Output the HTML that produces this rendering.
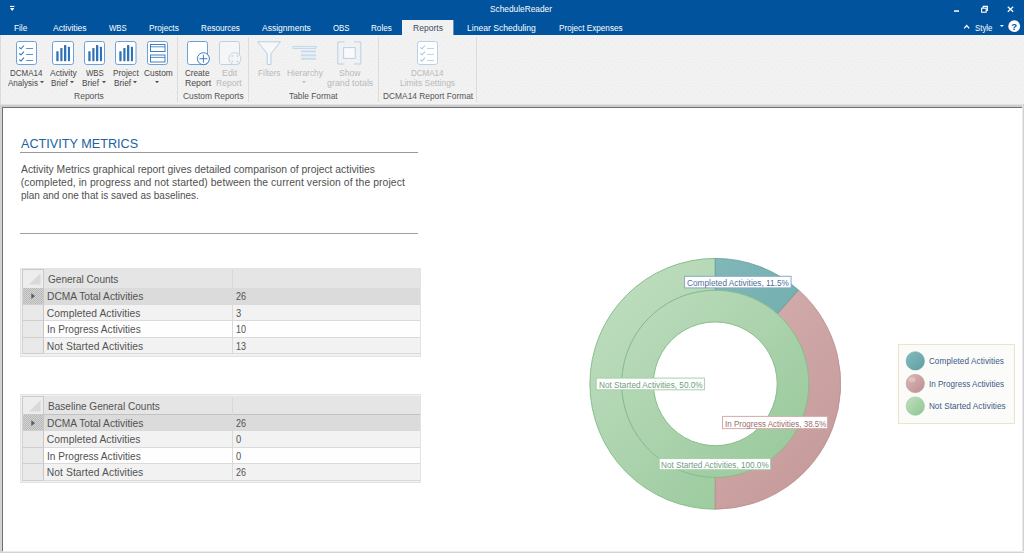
<!DOCTYPE html>
<html><head><meta charset="utf-8"><title>ScheduleReader</title>
<style>
html,body{margin:0;padding:0;width:1024px;height:553px;overflow:hidden;background:#fff;font-family:"Liberation Sans",sans-serif}
.abs{position:absolute;box-sizing:border-box}
.t{position:absolute;white-space:pre;transform-origin:0 50%;font-family:"Liberation Sans",sans-serif;line-height:normal}
</style></head><body>

<div class="abs" style="left:0;top:0;width:1024px;height:35px;background:#00539c"></div>
<svg class="abs" style="left:0;top:18px" width="1024" height="86" viewBox="0 18 1024 86"><defs><pattern id="dots" width="6" height="6" patternUnits="userSpaceOnUse"><rect width="6" height="6" fill="#f2f2f2"/><rect x="2" y="2" width="1" height="1" fill="#ebebeb"/><rect x="5" y="2" width="1" height="1" fill="#ebebeb"/><rect x="1" y="4" width="1" height="1" fill="#ececec"/><rect x="5" y="5" width="1" height="1" fill="#ececec"/><rect x="3" y="0" width="1" height="1" fill="#ececec"/></pattern></defs><rect x="0" y="35" width="1024" height="69" fill="url(#dots)"/><rect x="402" y="20" width="51.4" height="16" fill="url(#dots)"/></svg>
<div class="abs" style="left:0;top:104px;width:1024px;height:449px;background:#d3d3d3"></div><div class="abs" style="left:0;top:104px;width:1024px;height:1px;background:#e2e2e2"></div><div class="abs" style="left:0;top:105px;width:1024px;height:2px;background:#cdcdcd"></div>
<div class="abs" style="left:0;top:35px;width:1px;height:69px;background:#dcdcdc"></div>
<div class="abs" style="left:2px;top:107px;width:1020px;height:444px;background:#fff;border-left:1px solid #707076;border-top:1px solid #707076;box-sizing:border-box"></div>
<div class="abs" style="left:1022px;top:104px;width:1px;height:449px;background:#e8e8e8"></div><div class="abs" style="left:1023px;top:104px;width:1px;height:449px;background:#d2d2d2"></div>
<div class="abs" style="left:3px;top:551px;width:1021px;height:1px;background:#ebebeb"></div><div class="abs" style="left:0;top:552px;width:1024px;height:1px;background:#d2d2d2"></div>
<!-- window controls -->
<svg class="abs" style="left:940px;top:0" width="84" height="35" viewBox="940 0 84 35">
<rect x="954" y="10.3" width="5" height="1.5" fill="#fff"/>
<rect x="981.6" y="8.2" width="4.6" height="4" fill="none" stroke="#fff" stroke-width="1.1"/>
<path d="M983.2,8 V6.4 H987.4 V10.4 H986.4" fill="none" stroke="#fff" stroke-width="1.1"/>
<path d="M1007.8,6.8 L1013.2,11.8 M1013.2,6.8 L1007.8,11.8" stroke="#fff" stroke-width="1.2"/>
<path d="M964.2,28.4 L966.7,25.6 L969.2,28.4" fill="none" stroke="#fff" stroke-width="1.3"/>
<path d="M999.9,25 H1003.9 L1001.9,27 Z" fill="#fff"/>
<circle cx="1014.2" cy="26.2" r="5.9" fill="#fff"/>
<text x="1014.2" y="29.6" font-family="Liberation Sans, sans-serif" font-weight="bold" font-size="9.5" text-anchor="middle" fill="#00539c">?</text>
<path d="M0,0" />
</svg>
<svg class="abs" style="left:8px;top:4px" width="10" height="9" viewBox="8 4 10 9"><rect x="10" y="5.9" width="4.4" height="1.1" fill="#fff"/><path d="M10,8 H14.4 L12.2,10.9 Z" fill="#fff"/></svg>
<div class="abs" style="left:20px;top:152px;width:398px;height:1px;background:#999"></div>
<div class="abs" style="left:20px;top:233px;width:398px;height:1px;background:#a0a0a0"></div>

<div class="abs" style="left:177px;top:37px;width:1px;height:65px;background:#dcdcdc"></div><div class="abs" style="left:248px;top:37px;width:1px;height:65px;background:#dcdcdc"></div><div class="abs" style="left:378px;top:37px;width:1px;height:65px;background:#dcdcdc"></div><div class="abs" style="left:476px;top:37px;width:1px;height:65px;background:#dcdcdc"></div>
<svg class="abs" style="left:16px;top:41px" width="22" height="25" viewBox="0 0 22 25">
<rect x="0.5" y="0.5" width="20" height="23" rx="2.2" fill="#fff" stroke="#6da1da"/>
<path d="M3.2,6.4 L5,7.8 L8,4.5 M3.2,12.5 L5,13.9 L8,10.6 M3.2,18.6 L5,20 L8,16.7" fill="none" stroke="#2e73b8" stroke-width="1.05"/>
<path d="M10.1,7.5 H17 M10.1,13.5 H17 M10.1,19.5 H17" stroke="#2e73b8" stroke-width="1" opacity="0.75"/>
</svg><svg class="abs" style="left:52px;top:41px" width="23" height="25" viewBox="0 0 23 25">
<rect x="0.5" y="0.5" width="21" height="23" rx="2.2" fill="#fff" stroke="#6da1da"/>
<rect x="4.3" y="10.2" width="2.3" height="10" rx="0.6" fill="#2e73b8"/>
<rect x="8.3" y="7" width="2.2" height="13.2" rx="0.6" fill="#2e73b8"/>
<rect x="12" y="4.1" width="2.3" height="16.1" rx="0.6" fill="#2e73b8"/>
<rect x="15.9" y="5.7" width="2.1" height="14.5" rx="0.6" fill="#2e73b8"/>
</svg><svg class="abs" style="left:84px;top:41px" width="23" height="25" viewBox="0 0 23 25">
<rect x="0.5" y="0.5" width="20" height="23" rx="2.2" fill="#fff" stroke="#6da1da"/>
<rect x="4.3" y="10.2" width="2.3" height="10" rx="0.6" fill="#2e73b8"/>
<rect x="8.3" y="7" width="2.2" height="13.2" rx="0.6" fill="#2e73b8"/>
<rect x="12" y="4.1" width="2.3" height="16.1" rx="0.6" fill="#2e73b8"/>
<rect x="15.9" y="5.7" width="2.1" height="14.5" rx="0.6" fill="#2e73b8"/>
</svg><svg class="abs" style="left:115px;top:41px" width="23" height="25" viewBox="0 0 23 25">
<rect x="0.5" y="0.5" width="20.5" height="23" rx="2.2" fill="#fff" stroke="#6da1da"/>
<rect x="4.3" y="10.2" width="2.3" height="10" rx="0.6" fill="#2e73b8"/>
<rect x="8.3" y="7" width="2.2" height="13.2" rx="0.6" fill="#2e73b8"/>
<rect x="12" y="4.1" width="2.3" height="16.1" rx="0.6" fill="#2e73b8"/>
<rect x="15.9" y="5.7" width="2.1" height="14.5" rx="0.6" fill="#2e73b8"/>
</svg><svg class="abs" style="left:147px;top:41px" width="23" height="25" viewBox="0 0 23 25">
<rect x="0.5" y="0.5" width="20" height="23" rx="2.2" fill="#fff" stroke="#6da1da"/>
<rect x="3.5" y="3.5" width="14.5" height="7" fill="#fff" stroke="#2e73b8" stroke-width="0.9"/>
<path d="M3.5,5.8 H18" stroke="#2e73b8" stroke-width="0.8"/>
<rect x="3.5" y="14" width="14.5" height="7" fill="#fff" stroke="#2e73b8" stroke-width="0.9"/>
<path d="M3.5,16.4 H18" stroke="#2e73b8" stroke-width="0.8"/>
</svg><svg class="abs" style="left:187px;top:41px" width="24" height="26" viewBox="0 0 24 26">
<rect x="0.5" y="0.5" width="20" height="23" rx="2.2" fill="#fff" stroke="#6da1da"/>
<circle cx="16.4" cy="17.7" r="6" fill="#fff" stroke="#2e73b8" stroke-width="0.9"/>
<path d="M16.4,13.7 V21.7 M12.4,17.7 H20.4" stroke="#2e73b8" stroke-width="0.9"/>
</svg><svg class="abs" style="left:219px;top:41px" width="24" height="26" viewBox="0 0 24 26">
<rect x="0.5" y="0.5" width="20" height="23" rx="2.2" fill="#f6f6f6" stroke="#b6d1ea"/>
<circle cx="15.9" cy="17.7" r="6" fill="#f6f6f6" stroke="#b6d1ea" stroke-width="0.9"/>
<path d="M13,16.2 V14.8 H14.4 M17.4,14.8 H18.8 V16.2 M18.8,19.2 V20.6 H17.4 M14.4,20.6 H13 V19.2" fill="none" stroke="#b6d1ea" stroke-width="0.9"/>
</svg><svg class="abs" style="left:256px;top:40px" width="27" height="27" viewBox="256 40 27 27">
<path d="M257.8,41.8 H280.4 L271,53.6 V64.4 H267.2 V53.6 Z" fill="#f8f8f8" stroke="#b2ceea" stroke-width="1"/>
</svg><svg class="abs" style="left:290px;top:40px" width="30" height="27" viewBox="290 40 30 27">
<rect x="293" y="46.3" width="23" height="2.3" fill="#e6eef6" stroke="#b2ceea" stroke-width="0.7"/>
<rect x="301" y="50.4" width="15" height="2" fill="#c9dcee"/>
<rect x="301" y="54.2" width="15" height="2" fill="#c9dcee"/>
<rect x="301" y="57.8" width="15" height="2" fill="#c9dcee"/>
</svg><svg class="abs" style="left:335px;top:40px" width="30" height="27" viewBox="335 40 30 27">
<path d="M344.5,41.9 H337.8 V64 H344.5 M354,41.9 H360.8 V64 H354" fill="none" stroke="#b6d1ea" stroke-width="1"/>
<rect x="343.6" y="47.6" width="11.6" height="10.8" fill="#fafafa" stroke="#b6d1ea" stroke-width="1"/>
</svg><svg class="abs" style="left:417px;top:41px" width="22" height="25" viewBox="0 0 22 25">
<rect x="0.5" y="0.5" width="20" height="23" rx="2.2" fill="#fff" stroke="#b6d1ea"/>
<path d="M3.2,6.4 L5,7.8 L8,4.5 M3.2,12.5 L5,13.9 L8,10.6 M3.2,18.6 L5,20 L8,16.7" fill="none" stroke="#a9c6e2" stroke-width="1.05"/>
<path d="M10.1,7.5 H17 M10.1,13.5 H17 M10.1,19.5 H17" stroke="#a9c6e2" stroke-width="1" opacity="0.75"/>
</svg>
<svg class="abs" style="left:40.0px;top:81.2px" width="4" height="2.7"><path d="M0,0 H4 L2.0,2.2 Z" fill="#505050"/></svg><svg class="abs" style="left:70.0px;top:81.2px" width="4" height="2.7"><path d="M0,0 H4 L2.0,2.2 Z" fill="#505050"/></svg><svg class="abs" style="left:102.0px;top:81.2px" width="4" height="2.7"><path d="M0,0 H4 L2.0,2.2 Z" fill="#505050"/></svg><svg class="abs" style="left:133.3px;top:81.2px" width="4" height="2.7"><path d="M0,0 H4 L2.0,2.2 Z" fill="#505050"/></svg><svg class="abs" style="left:155.0px;top:80.8px" width="4" height="2.7"><path d="M0,0 H4 L2.0,2.2 Z" fill="#505050"/></svg><svg class="abs" style="left:301.8px;top:80.8px" width="4" height="2.7"><path d="M0,0 H4 L2.0,2.2 Z" fill="#c0c0c0"/></svg>
<div class="abs" style="left:20px;top:267.5px;width:401px;height:89px;border:1.5px solid #e3e3e3;background:#f1f1f1"></div>
<div class="abs" style="left:22px;top:269.0px;width:397.5px;height:19.5px;background:#e5e5e5;border-bottom:1px solid #c2c2c2"></div>
<div class="abs" style="left:22px;top:269.0px;width:22px;height:19.5px;background:#ededed;border:1px solid #c9c9c9"></div>
<svg class="abs" style="left:22px;top:269.0px" width="22" height="20" viewBox="0 0 22 20"><path d="M18.6,4.2 L18.6,15.6 L6.9,15.6 Z" fill="#d9d9d9"/></svg>
<div class="abs" style="left:232px;top:270.0px;width:1px;height:18px;background:#d8d8d8"></div>
<div class="abs" style="left:44px;top:288.30px;width:375.5px;height:16.45px;background:#dbdbdb;border-bottom:1px solid #dadada"></div>
<div class="abs" style="left:22px;top:288.30px;width:22px;height:16.45px;background:repeating-conic-gradient(#b9b9b9 0% 25%, #d2d2d2 0% 50%) 0 0/2px 2px;border-right:1px solid #c6c6c6;border-left:1px solid #d2d2d2;border-bottom:1px solid #cfcfcf"></div>
<div class="abs" style="left:232px;top:288.30px;width:1px;height:16.45px;background:#dadada"></div>
<div class="abs" style="left:44px;top:304.75px;width:375.5px;height:16.45px;background:#f2f2f2;border-bottom:1px solid #dadada"></div>
<div class="abs" style="left:22px;top:304.75px;width:22px;height:16.45px;background:#e9e9e9;border-right:1px solid #c6c6c6;border-left:1px solid #d2d2d2;border-bottom:1px solid #cfcfcf"></div>
<div class="abs" style="left:232px;top:304.75px;width:1px;height:16.45px;background:#dadada"></div>
<div class="abs" style="left:44px;top:321.20px;width:375.5px;height:16.45px;background:#fefefe;border-bottom:1px solid #dadada"></div>
<div class="abs" style="left:22px;top:321.20px;width:22px;height:16.45px;background:#e9e9e9;border-right:1px solid #c6c6c6;border-left:1px solid #d2d2d2;border-bottom:1px solid #cfcfcf"></div>
<div class="abs" style="left:232px;top:321.20px;width:1px;height:16.45px;background:#dadada"></div>
<div class="abs" style="left:44px;top:337.65px;width:375.5px;height:16.45px;background:#f2f2f2;border-bottom:1px solid #dadada"></div>
<div class="abs" style="left:22px;top:337.65px;width:22px;height:16.45px;background:#e9e9e9;border-right:1px solid #c6c6c6;border-left:1px solid #d2d2d2;border-bottom:1px solid #cfcfcf"></div>
<div class="abs" style="left:232px;top:337.65px;width:1px;height:16.45px;background:#dadada"></div>
<svg class="abs" style="left:31px;top:293.30px" width="5" height="7"><path d="M0.3,0.2 L4,3.1 L0.3,6 Z" fill="#5c5c64"/></svg>
<div class="abs" style="left:20px;top:394px;width:401px;height:89px;border:1.5px solid #e3e3e3;background:#f1f1f1"></div>
<div class="abs" style="left:22px;top:395.5px;width:397.5px;height:19.5px;background:#e5e5e5;border-bottom:1px solid #c2c2c2"></div>
<div class="abs" style="left:22px;top:395.5px;width:22px;height:19.5px;background:#ededed;border:1px solid #c9c9c9"></div>
<svg class="abs" style="left:22px;top:395.5px" width="22" height="20" viewBox="0 0 22 20"><path d="M18.6,4.2 L18.6,15.6 L6.9,15.6 Z" fill="#d9d9d9"/></svg>
<div class="abs" style="left:232px;top:396.5px;width:1px;height:18px;background:#d8d8d8"></div>
<div class="abs" style="left:44px;top:414.80px;width:375.5px;height:16.45px;background:#dbdbdb;border-bottom:1px solid #dadada"></div>
<div class="abs" style="left:22px;top:414.80px;width:22px;height:16.45px;background:repeating-conic-gradient(#b9b9b9 0% 25%, #d2d2d2 0% 50%) 0 0/2px 2px;border-right:1px solid #c6c6c6;border-left:1px solid #d2d2d2;border-bottom:1px solid #cfcfcf"></div>
<div class="abs" style="left:232px;top:414.80px;width:1px;height:16.45px;background:#dadada"></div>
<div class="abs" style="left:44px;top:431.25px;width:375.5px;height:16.45px;background:#f2f2f2;border-bottom:1px solid #dadada"></div>
<div class="abs" style="left:22px;top:431.25px;width:22px;height:16.45px;background:#e9e9e9;border-right:1px solid #c6c6c6;border-left:1px solid #d2d2d2;border-bottom:1px solid #cfcfcf"></div>
<div class="abs" style="left:232px;top:431.25px;width:1px;height:16.45px;background:#dadada"></div>
<div class="abs" style="left:44px;top:447.70px;width:375.5px;height:16.45px;background:#fefefe;border-bottom:1px solid #dadada"></div>
<div class="abs" style="left:22px;top:447.70px;width:22px;height:16.45px;background:#e9e9e9;border-right:1px solid #c6c6c6;border-left:1px solid #d2d2d2;border-bottom:1px solid #cfcfcf"></div>
<div class="abs" style="left:232px;top:447.70px;width:1px;height:16.45px;background:#dadada"></div>
<div class="abs" style="left:44px;top:464.15px;width:375.5px;height:16.45px;background:#f2f2f2;border-bottom:1px solid #dadada"></div>
<div class="abs" style="left:22px;top:464.15px;width:22px;height:16.45px;background:#e9e9e9;border-right:1px solid #c6c6c6;border-left:1px solid #d2d2d2;border-bottom:1px solid #cfcfcf"></div>
<div class="abs" style="left:232px;top:464.15px;width:1px;height:16.45px;background:#dadada"></div>
<svg class="abs" style="left:31px;top:419.80px" width="5" height="7"><path d="M0.3,0.2 L4,3.1 L0.3,6 Z" fill="#5c5c64"/></svg>

<svg class="abs" style="left:0;top:0" width="1024" height="553" viewBox="0 0 1024 553">
<defs>
<linearGradient id="gG" gradientUnits="userSpaceOnUse" x1="589.9" y1="258.4" x2="840.6999999999999" y2="509.20000000000005"><stop offset="0" stop-color="#c3e0c3"/><stop offset="1" stop-color="#91c494"/></linearGradient>
<linearGradient id="gP" gradientUnits="userSpaceOnUse" x1="589.9" y1="258.4" x2="840.6999999999999" y2="509.20000000000005"><stop offset="0" stop-color="#ddb9b9"/><stop offset="1" stop-color="#c39797"/></linearGradient>
<linearGradient id="gT" gradientUnits="userSpaceOnUse" x1="589.9" y1="258.4" x2="840.6999999999999" y2="509.20000000000005"><stop offset="0" stop-color="#8dc0c0"/><stop offset="1" stop-color="#5c9ea0"/></linearGradient>
</defs>
<path d="M715.30,509.20 A125.4,125.4 0 0 1 715.30,258.40 L715.30,290.30 A93.5,93.5 0 0 0 715.30,477.30 Z" fill="url(#gG)" stroke="#88be8c" stroke-width="1"/>
<path d="M798.46,289.94 A125.4,125.4 0 0 1 715.30,509.20 L715.30,477.30 A93.5,93.5 0 0 0 777.30,313.81 Z" fill="url(#gP)" stroke="#b98a8a" stroke-width="0.8"/>
<path d="M715.30,258.40 A125.4,125.4 0 0 1 798.46,289.94 L777.30,313.81 A93.5,93.5 0 0 0 715.30,290.30 Z" fill="url(#gT)" stroke="#5f9c9e" stroke-width="0.8"/>
<path d="M715.3,290.3 A93.5,93.5 0 1 1 715.29,290.3 Z M715.3,321.90000000000003 A61.9,61.9 0 1 0 715.31,321.90000000000003 Z" fill="url(#gG)" fill-rule="evenodd" stroke="#88be8c" stroke-width="1"/>
</svg>

<svg class="abs" style="left:0;top:0" width="1024" height="553" viewBox="0 0 1024 553"><rect x="684.60" y="276.30" width="106.50" height="11.60" fill="#fff" stroke="#8aa9c8" stroke-width="1"/><rect x="596.20" y="378.10" width="108.20" height="11.70" fill="#fff" stroke="#a6d0aa" stroke-width="1"/><rect x="722.50" y="416.40" width="104.90" height="12.20" fill="#fff" stroke="#d2acac" stroke-width="1"/><rect x="659.20" y="458.50" width="111.30" height="11.20" fill="#fff" stroke="#a6d0aa" stroke-width="1"/></svg>

<div class="abs" style="left:898px;top:344px;width:117px;height:80px;background:#fbfbfa;border:1px solid #ece3c8"></div>
<svg class="abs" style="left:900px;top:346px" width="40" height="76" viewBox="900 346 40 76">
<defs>
<linearGradient id="lT" x1="0" y1="0" x2="1" y2="1"><stop offset="0" stop-color="#86bbbd"/><stop offset="1" stop-color="#5d9fa2"/></linearGradient>
<linearGradient id="lP" x1="0" y1="0" x2="1" y2="1"><stop offset="0" stop-color="#dcb8b8"/><stop offset="1" stop-color="#bd8e8e"/></linearGradient>
<linearGradient id="lG" x1="0" y1="0" x2="1" y2="1"><stop offset="0" stop-color="#bfe0bf"/><stop offset="1" stop-color="#90c493"/></linearGradient>
</defs>
<circle cx="915.3" cy="360.9" r="9.2" fill="url(#lT)" stroke="#6aa5a8" stroke-width="0.6"/>
<circle cx="915.3" cy="383.5" r="9.2" fill="url(#lP)" stroke="#c49a9a" stroke-width="0.6"/><ellipse cx="912" cy="379.5" rx="3.6" ry="2.6" fill="#ecd6cf" opacity="0.55"/>
<circle cx="915.3" cy="406.1" r="9.2" fill="url(#lG)" stroke="#95c898" stroke-width="0.6"/>
</svg>

<span class="t" style="left:489.80px;top:4.03px;font-size:9.2px;transform:scaleX(0.9043);color:#ffffff;">ScheduleReader</span>
<span class="t" style="left:13.50px;top:22.53px;font-size:9.2px;transform:scaleX(0.8979);color:#ffffff;">File</span>
<span class="t" style="left:53.30px;top:22.53px;font-size:9.2px;transform:scaleX(0.9269);color:#ffffff;">Activities</span>
<span class="t" style="left:109.00px;top:22.53px;font-size:9.2px;transform:scaleX(0.8454);color:#ffffff;">WBS</span>
<span class="t" style="left:148.60px;top:22.53px;font-size:9.2px;transform:scaleX(0.8975);color:#ffffff;">Projects</span>
<span class="t" style="left:201.00px;top:22.53px;font-size:9.2px;transform:scaleX(0.8857);color:#ffffff;">Resources</span>
<span class="t" style="left:262.40px;top:22.53px;font-size:9.2px;transform:scaleX(0.9276);color:#ffffff;">Assignments</span>
<span class="t" style="left:332.90px;top:22.53px;font-size:9.2px;transform:scaleX(0.8502);color:#ffffff;">OBS</span>
<span class="t" style="left:370.50px;top:22.53px;font-size:9.2px;transform:scaleX(0.8851);color:#ffffff;">Roles</span>
<span class="t" style="left:466.50px;top:22.53px;font-size:9.2px;transform:scaleX(0.9353);color:#ffffff;">Linear Scheduling</span>
<span class="t" style="left:559.40px;top:22.53px;font-size:9.2px;transform:scaleX(0.8895);color:#ffffff;">Project Expenses</span>
<span class="t" style="left:413.20px;top:22.53px;font-size:9.2px;transform:scaleX(0.9294);color:#414c68;">Reports</span>
<span class="t" style="left:974.90px;top:22.53px;font-size:9.2px;transform:scaleX(0.8563);color:#ffffff;">Style</span>
<span class="t" style="left:10.00px;top:67.83px;font-size:9.2px;transform:scaleX(0.8691);color:#484848;">DCMA14</span>
<span class="t" style="left:7.60px;top:77.73px;font-size:9.2px;transform:scaleX(0.8738);color:#484848;">Analysis</span>
<span class="t" style="left:49.70px;top:67.83px;font-size:9.2px;transform:scaleX(0.9207);color:#484848;">Activity</span>
<span class="t" style="left:50.80px;top:77.73px;font-size:9.2px;transform:scaleX(0.8833);color:#484848;">Brief</span>
<span class="t" style="left:85.60px;top:67.83px;font-size:9.2px;transform:scaleX(0.8501);color:#484848;">WBS</span>
<span class="t" style="left:82.00px;top:77.73px;font-size:9.2px;transform:scaleX(0.8992);color:#484848;">Brief</span>
<span class="t" style="left:112.80px;top:67.83px;font-size:9.2px;transform:scaleX(0.9018);color:#484848;">Project</span>
<span class="t" style="left:113.90px;top:77.73px;font-size:9.2px;transform:scaleX(0.9045);color:#484848;">Brief</span>
<span class="t" style="left:143.60px;top:67.83px;font-size:9.2px;transform:scaleX(0.9066);color:#484848;">Custom</span>
<span class="t" style="left:185.40px;top:67.83px;font-size:9.2px;transform:scaleX(0.8848);color:#484848;">Create</span>
<span class="t" style="left:184.70px;top:77.73px;font-size:9.2px;transform:scaleX(0.9464);color:#484848;">Report</span>
<span class="t" style="left:221.70px;top:67.83px;font-size:9.2px;transform:scaleX(0.9594);color:#b9b9b9;">Edit</span>
<span class="t" style="left:216.10px;top:77.73px;font-size:9.2px;transform:scaleX(0.9319);color:#b9b9b9;">Report</span>
<span class="t" style="left:257.60px;top:67.83px;font-size:9.2px;transform:scaleX(0.8994);color:#b9b9b9;">Filters</span>
<span class="t" style="left:286.70px;top:67.83px;font-size:9.2px;transform:scaleX(0.9157);color:#b9b9b9;">Hierarchy</span>
<span class="t" style="left:339.10px;top:67.83px;font-size:9.2px;transform:scaleX(0.9311);color:#b9b9b9;">Show</span>
<span class="t" style="left:326.80px;top:77.73px;font-size:9.2px;transform:scaleX(0.9643);color:#b9b9b9;">grand totals</span>
<span class="t" style="left:411.10px;top:67.83px;font-size:9.2px;transform:scaleX(0.8691);color:#b9b9b9;">DCMA14</span>
<span class="t" style="left:399.80px;top:77.73px;font-size:9.2px;transform:scaleX(0.9222);color:#b9b9b9;">Limits Settings</span>
<span class="t" style="left:74.00px;top:90.73px;font-size:9.2px;transform:scaleX(0.9263);color:#555555;">Reports</span>
<span class="t" style="left:182.70px;top:90.73px;font-size:9.2px;transform:scaleX(0.9128);color:#555555;">Custom Reports</span>
<span class="t" style="left:289.40px;top:90.73px;font-size:9.2px;transform:scaleX(0.9063);color:#555555;">Table Format</span>
<span class="t" style="left:382.80px;top:90.73px;font-size:9.2px;transform:scaleX(0.9105);color:#555555;">DCMA14 Report Format</span>
<span class="t" style="left:20.70px;top:135.67px;font-size:13.6px;transform:scaleX(0.9302);color:#22639e;">ACTIVITY METRICS</span>
<span class="t" style="left:20.70px;top:163.72px;font-size:10.4px;transform:scaleX(0.9951);color:#505050;">Activity Metrics graphical report gives detailed comparison of project activities</span>
<span class="t" style="left:20.70px;top:177.22px;font-size:10.4px;letter-spacing:0.071px;color:#505050;">(completed, in progress and not started) between the current version of the project</span>
<span class="t" style="left:20.70px;top:190.42px;font-size:10.4px;transform:scaleX(0.9618);color:#505050;">plan and one that is saved as baselines.</span>
<span class="t" style="left:48.20px;top:274.21px;font-size:10.3px;transform:scaleX(0.9761);color:#525252;">General Counts</span>
<span class="t" style="left:46.80px;top:291.41px;font-size:10.3px;transform:scaleX(0.9929);color:#525252;">DCMA Total Activities</span>
<span class="t" style="left:235.70px;top:291.41px;font-size:10.3px;transform:scaleX(0.8719);color:#525252;">26</span>
<span class="t" style="left:46.80px;top:307.86px;font-size:10.3px;letter-spacing:0.052px;color:#525252;">Completed Activities</span>
<span class="t" style="left:235.70px;top:307.86px;font-size:10.3px;transform:scaleX(0.9068);color:#525252;">3</span>
<span class="t" style="left:46.80px;top:324.31px;font-size:10.3px;transform:scaleX(0.9803);color:#525252;">In Progress Activities</span>
<span class="t" style="left:235.70px;top:324.31px;font-size:10.3px;transform:scaleX(0.8719);color:#525252;">10</span>
<span class="t" style="left:46.80px;top:340.76px;font-size:10.3px;letter-spacing:0.067px;color:#525252;">Not Started Activities</span>
<span class="t" style="left:235.70px;top:340.76px;font-size:10.3px;transform:scaleX(0.8719);color:#525252;">13</span>
<span class="t" style="left:48.20px;top:400.71px;font-size:10.3px;transform:scaleX(0.9766);color:#525252;">Baseline General Counts</span>
<span class="t" style="left:46.80px;top:417.91px;font-size:10.3px;transform:scaleX(0.9929);color:#525252;">DCMA Total Activities</span>
<span class="t" style="left:235.70px;top:417.91px;font-size:10.3px;transform:scaleX(0.8719);color:#525252;">26</span>
<span class="t" style="left:46.80px;top:434.36px;font-size:10.3px;letter-spacing:0.052px;color:#525252;">Completed Activities</span>
<span class="t" style="left:235.70px;top:434.36px;font-size:10.3px;transform:scaleX(0.9068);color:#525252;">0</span>
<span class="t" style="left:46.80px;top:450.81px;font-size:10.3px;transform:scaleX(0.9803);color:#525252;">In Progress Activities</span>
<span class="t" style="left:235.70px;top:450.81px;font-size:10.3px;transform:scaleX(0.9068);color:#525252;">0</span>
<span class="t" style="left:46.80px;top:467.26px;font-size:10.3px;letter-spacing:0.067px;color:#525252;">Not Started Activities</span>
<span class="t" style="left:235.70px;top:467.26px;font-size:10.3px;transform:scaleX(0.8719);color:#525252;">26</span>
<span class="t" style="left:687.20px;top:278.26px;font-size:8.3px;transform:scaleX(0.9967);color:#4e6e98;">Completed Activities, 11.5%</span>
<span class="t" style="left:598.70px;top:380.06px;font-size:8.3px;transform:scaleX(0.9896);color:#6f9c80;">Not Started Activities, 50.0%</span>
<span class="t" style="left:724.80px;top:418.76px;font-size:8.3px;transform:scaleX(0.9643);color:#9e6c6c;">In Progress Activities, 38.5%</span>
<span class="t" style="left:661.20px;top:460.16px;font-size:8.3px;transform:scaleX(0.9852);color:#6f9c80;">Not Started Activities, 100.0%</span>
<span class="t" style="left:928.90px;top:357.25px;font-size:8.2px;letter-spacing:0.067px;color:#3d5987;">Completed Activities</span>
<span class="t" style="left:928.90px;top:380.05px;font-size:8.2px;transform:scaleX(0.9868);color:#3d5987;">In Progress Activities</span>
<span class="t" style="left:928.90px;top:402.25px;font-size:8.2px;letter-spacing:0.060px;color:#3d5987;">Not Started Activities</span>
</body></html>
